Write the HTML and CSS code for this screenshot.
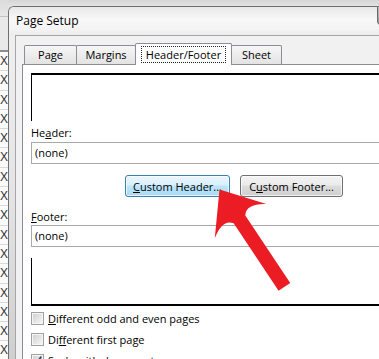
FILE: index.html
```html
<!DOCTYPE html>
<html>
<head>
<meta charset="utf-8">
<title>Page Setup</title>
<link rel="stylesheet" href="styles.css">
</head>
<body>
<div class="screen">
  <div class="sheet">
    <div class="sheet-top"><div class="sheet-bar"></div></div>
    <div class="cell">X</div>
    <div class="cell">X</div>
    <div class="cell">X</div>
    <div class="cell">X</div>
    <div class="cell">X</div>
    <div class="cell">X</div>
    <div class="cell">X</div>
    <div class="cell">X</div>
    <div class="cell">X</div>
    <div class="cell">X</div>
    <div class="cell">X</div>
    <div class="cell">X</div>
    <div class="cell">X</div>
    <div class="cell">X</div>
    <div class="cell">X</div>
    <div class="cell">X</div>
  </div>
  <div class="dialog">
    <div class="titlebar">
      <span class="title">Page Setup</span>
      <span class="close-btn"></span>
    </div>
    <div class="client">
      <div class="tabs">
        <div class="tab tab-page">Page</div>
        <div class="tab tab-margins">Margins</div>
        <div class="tab tab-active"><span class="focus">Header/Footer</span></div>
        <div class="tab tab-sheet">Sheet</div>
      </div>
      <div class="panel">
        <div class="preview preview-header"></div>
        <div class="label label-header">He<u>a</u>der:</div>
        <div class="combo">(none)</div>
        <div class="buttons">
          <button class="btn btn-hot"><u>C</u>ustom Header...</button>
          <button class="btn">C<u>u</u>stom Footer...</button>
        </div>
        <div class="label label-footer"><u>F</u>ooter:</div>
        <div class="combo combo-footer">(none)</div>
        <div class="preview preview-footer"></div>
        <div class="checks">
          <div class="check"><span class="box"></span><span><u>D</u>ifferent odd and even pages</span></div>
          <div class="check"><span class="box"></span><span>Di<u>f</u>ferent first page</span></div>
          <div class="check"><span class="box"><svg class="tick" width="11" height="11" viewBox="0 0 11 11"><path d="M2.2 5.6 L4.5 8.2 L8.8 2.2" fill="none" stroke="#2b3f63" stroke-width="1.8" stroke-linecap="round" stroke-linejoin="round"/></svg></span><span>Sca<u>l</u>e with document</span></div>
        </div>
      </div>
    </div>
  </div>
  <svg class="arrow" width="379" height="359" viewBox="0 0 379 359">
    <path transform="translate(219.5 189.5) rotate(56.3)" d="M0 0 L38 -31 Q26 -14 36 -7 L117 -7 L117 7 L36 7 Q26 14 38 31 Z" fill="#ec1c24"/>
  </svg>
</div>
</body>
</html>
```

FILE: styles.css
```css
* { box-sizing: border-box; }

html, body {
  margin: 0;
  padding: 0;
}

body {
  width: 379px;
  height: 359px;
  overflow: hidden;
  font-family: "Open Sans", "Noto Sans", sans-serif;
  font-size: 11px;
  color: #000;
}

.screen {
  position: relative;
  width: 379px;
  height: 359px;
  overflow: hidden;
  display: flex;
  align-items: flex-start;
  background: linear-gradient(#d6d6d6, #e2e2e2 6px);
}

/* spreadsheet strip behind the dialog */
.sheet {
  flex: none;
  width: 8px;
  height: 359px;
  background: #fbfbfb;
  display: flex;
  flex-direction: column;
  overflow: hidden;
}

.sheet-top {
  flex: none;
  height: 52px;
  background: #e9e9e9;
  border-bottom: 2px solid #8c8c8c;
}

.sheet-bar {
  height: 17px;
  background: linear-gradient(#dcdcdc, #e6e6e6);
  border-bottom: 1px solid #c2c2c2;
}

.cell {
  flex: none;
  height: 19.3px;
  border-bottom: 1px solid #dadada;
  font-family: "Liberation Sans", Arial, sans-serif;
  font-size: 12px;
  line-height: 19px;
  color: #333;
  text-align: right;
  white-space: nowrap;
  overflow: hidden;
  direction: rtl;
}

/* dialog window */
.dialog {
  flex: none;
  width: 420px;
  height: 420px;
  margin-top: 6px;
  border-top: 1px solid #6f6f6f;
  border-left: 1px solid #6f6f6f;
  border-radius: 6px 0 0 0;
  background: linear-gradient(#f1f1f1, #e4e4e4 45%, #c6c6c6 100%);
}

.titlebar {
  display: flex;
  align-items: flex-start;
  height: 28px;
  padding-left: 7px;
  border-radius: 5px 0 0 0;
  background: linear-gradient(#e8e8e8, #f8f8f8 45%, #f3f3f3 80%, #ececec);
}

.title {
  font-size: 12px;
  line-height: 16px;
  margin-top: 6px;
}

.close-btn {
  margin-left: auto;
  margin-right: 5px;
  width: 46px;
  height: 18px;
  border: 1px solid #6a6a6a;
  border-top: none;
  border-radius: 0 0 4px 4px;
  background: linear-gradient(#bdbdbd, #9a9a9a);
}

.client {
  margin-left: 6px;
  height: 392px;
  border-top: 1px solid #a6a6a6;
  border-left: 1px solid #a6a6a6;
  background: #f1f1f1;
  padding: 7px 0 0 6px;
}

/* tabs */
.tabs {
  display: flex;
  align-items: flex-end;
  height: 21px;
  padding-left: 2px;
}

.tab {
  flex: none;
  height: 19px;
  border: 1px solid #8c8e94;
  border-bottom: none;
  border-radius: 2px 2px 0 0;
  background: linear-gradient(#f6f6f6, #e3e3e3);
  text-align: center;
  line-height: 18px;
}

.tab-page { width: 53px; }
.tab-margins { width: 60px; margin-left: -1px; }
.tab-sheet { width: 51px; margin-left: -1px; }

.tab-active {
  position: relative;
  z-index: 1;
  width: 97px;
  height: 22px;
  margin-left: -1px;
  margin-bottom: -1px;
  background: #fff;
  display: flex;
  justify-content: center;
  align-items: flex-start;
}

.focus {
  margin-top: 2px;
  padding: 0 4px;
  border: 1px dotted #222;
  line-height: 15px;
}

/* panel */
.panel {
  height: 380px;
  border-top: 1px solid #8c8e94;
  border-left: 1px solid #8c8e94;
  background: #fff;
  padding: 8px 0 0 8px;
}

.preview-header {
  height: 48px;
  border-top: 2px solid #000;
  border-left: 1px solid #000;
}

.preview-footer {
  height: 48px;
  margin-top: 11px;
  border-bottom: 2px solid #000;
  border-left: 1px solid #000;
}

.label {
  line-height: 15px;
}

.label-header { margin-top: 4px; }
.label-footer { margin-top: 12px; }

.combo {
  height: 22px;
  margin-top: 2px;
  border: 1px solid #a9a9a9;
  border-right: none;
  padding-left: 3px;
  line-height: 20px;
}

.combo-footer { margin-top: 1px; }

.buttons {
  display: flex;
  gap: 10px;
  margin-top: 11px;
  padding-left: 94px;
}

.btn {
  flex: none;
  width: 103px;
  height: 22px;
  padding: 0;
  font: inherit;
  line-height: 19px;
  color: #000;
  border: 1px solid #707070;
  border-radius: 3px;
  background: linear-gradient(#f3f3f3 0%, #ebebeb 45%, #dddddd 50%, #cfcfcf 100%);
  box-shadow: inset 0 0 0 1px rgba(255, 255, 255, 0.7);
}

.btn-hot {
  width: 105px;
  border-color: #3c7fb1;
  background: linear-gradient(#eaf6fd 0%, #d9f0fc 45%, #bee6fd 50%, #a7d9f5 100%);
}

/* checkboxes */
.checks {
  margin-top: 2px;
}

.check {
  display: flex;
  align-items: center;
  height: 21px;
  line-height: 15px;
}

.box {
  flex: none;
  width: 13px;
  height: 13px;
  margin-right: 4px;
  border: 1px solid #a0a0a0;
  background: linear-gradient(135deg, #cdcdcd 0%, #e6e6e6 55%, #f7f7f7 100%);
  box-shadow: inset 0 0 0 1px #f6f6f6;
  display: flex;
  align-items: center;
  justify-content: center;
}

.tick { display: block; }

/* red call-out arrow drawn over the dialog */
.arrow {
  position: absolute;
  left: 0;
  top: 0;
  pointer-events: none;
}
```
